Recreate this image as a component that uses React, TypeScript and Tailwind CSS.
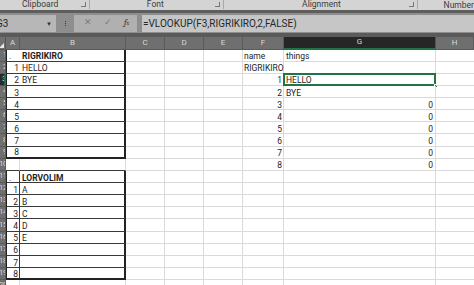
import type { ReactNode } from 'react'

const FONT = "font-['Liberation_Sans_Narrow','Roboto',sans-serif]"

const COLS = ['', 'A', 'B', 'C', 'D', 'E', 'F', 'G', 'H']

type Row = {
  a?: string
  b?: string
  f?: string
  g?: string
  bold?: boolean
  table?: 0 | 1 | 2 // 0 = none, 1 = first table, 2 = second table (has A|B divider)
  last?: boolean
  above?: boolean // row sits right above a table
}

const rows: Row[] = [
  { a: '.', b: 'RIGRIKIRO', bold: true, table: 1, f: 'name', g: 'things' },
  { a: '1', b: 'HELLO', table: 1, f: 'RIGRIKIRO' },
  { a: '2', b: 'BYE', table: 1, f: '1', g: 'HELLO' },
  { a: '3', table: 1, f: '2', g: 'BYE' },
  { a: '4', table: 1, f: '3', g: '0' },
  { a: '5', table: 1, f: '4', g: '0' },
  { a: '6', table: 1, f: '5', g: '0' },
  { a: '7', table: 1, f: '6', g: '0' },
  { a: '8', table: 1, last: true, f: '7', g: '0' },
  { f: '8', g: '0', above: true },
  { a: '.', b: 'LORVOLIM', bold: true, table: 2 },
  { a: '1', b: 'A', table: 2 },
  { a: '2', b: 'B', table: 2 },
  { a: '3', b: 'C', table: 2 },
  { a: '4', b: 'D', table: 2 },
  { a: '5', b: 'E', table: 2 },
  { a: '6', table: 2 },
  { a: '7', table: 2 },
  { a: '8', table: 2, last: true },
  {},
]

function Cell({ children, className = '' }: { children?: ReactNode; className?: string }) {
  return (
    <div className={`relative flex items-end whitespace-nowrap leading-none text-[8.5px] text-[#1e1e1e] ${className}`}>
      {children}
    </div>
  )
}

function Launcher() {
  return <span className="ml-auto mr-[3px] w-[5px] h-[5px] border border-[#777] border-t-0 border-l-0" />
}

function Ribbon() {
  return (
    <div className={`${FONT} text-[8.5px]`}>
      <div className="h-[10px] bg-[#d4d4d4] flex items-end text-[#3c3c3c] leading-none pb-[1px]">
        <div className="w-[91px] h-[9px] flex items-center border-r border-[#a8a8a8]">
          <span className="ml-[22px]">Clipboard</span>
          <Launcher />
        </div>
        <div className="w-[136px] h-[9px] flex items-center border-r border-[#a8a8a8]">
          <span className="ml-[57px]">Font</span>
          <Launcher />
        </div>
        <div className="w-[196px] h-[9px] flex items-center border-r border-[#a8a8a8]">
          <span className="ml-[78px]">Alignment</span>
          <Launcher />
        </div>
        <span className="ml-[26px]">Number</span>
      </div>
      <div className="h-[3px] bg-[#5e5e5e]" />
      <div className="h-[20px] bg-[#8e8e8e] flex items-center">
        <div className="w-[56px] h-[17px] bg-[#b7b7b7] flex items-center overflow-hidden text-[#2a2a2a]">
          <span className="-ml-[4px] text-[10px]">G3</span>
          <span className="ml-auto mr-[4px] text-[6px] text-[#333]">▼</span>
        </div>
        <div className="w-[18px] flex flex-col items-center gap-[1px]">
          <span className="w-[1px] h-[1px] bg-[#333]" />
          <span className="w-[1px] h-[1px] bg-[#333]" />
          <span className="w-[1px] h-[1px] bg-[#333]" />
        </div>
        <div className="w-[63px] h-[17px] bg-[#b0b0b0] flex items-center text-[#7a7a7a]">
          <span className="ml-[10px] text-[9px]">✕</span>
          <span className="ml-[12px] text-[9px]">✓</span>
          <span className="ml-[12px] text-[9px] italic font-serif text-[#333]">
            f<span className="text-[6px]">x</span>
          </span>
        </div>
        <div className="w-[5px]" />
        <div className="flex-1 h-[17px] bg-[#c6c6c6] flex items-center text-[#262626] text-[10px] pl-[1px]">
          =VLOOKUP(F3,RIGRIKIRO,2,FALSE)
        </div>
      </div>
      <div className="h-[4px] bg-[#5a5a5a]" />
    </div>
  )
}

export default function App() {
  return (
    <div className={`w-[474px] h-[285px] overflow-hidden bg-white ${FONT}`}>
      <Ribbon />
      <div className="grid grid-cols-[6px_14px_106px_39px_39px_39px_41px_152px_38px] grid-rows-[12.5px_repeat(20,12.15px)]">
        {COLS.map((c, i) =>
          i === 0 ? (
            <div key="corner" className="bg-[#6f6f6f] border-r border-b border-[#555] flex items-end justify-end">
              <span className="w-0 h-0 border-l-[5px] border-l-transparent border-b-[5px] border-b-[#e8e8e8] mr-[1px] mb-[1px]" />
            </div>
          ) : (
            <div
              key={c}
              className={
                c === 'G'
                  ? 'bg-[#262626] text-[#d8d8d8] border-r border-[#555] border-b-2 border-b-[#217346] flex items-center justify-center text-[8px] leading-none'
                  : 'bg-[#6f6f6f] text-[#d8d8d8] border-r border-b border-[#5a5a5a] flex items-center justify-center text-[8px] leading-none'
              }
            >
              {c}
            </div>
          ),
        )}
        {rows.map((r, i) => {
          const n = i + 1
          const inTable = !!r.table
          const rowBorder = inTable || r.above ? 'border-b border-b-[#3a3a3a]' : 'border-b border-b-[#dadada]'
          const lastBorder = r.last ? 'border-b-2 border-b-[#222]' : rowBorder
          const aDivider = r.table === 2 ? 'border-r border-r-[#3a3a3a]' : inTable ? '' : 'border-r border-r-[#dadada]'
          return [
            <div
              key={`h${n}`}
              className={
                n === 3
                  ? 'bg-[#2a2a2a] border-r-2 border-r-[#217346] border-b border-b-[#555] text-[7px] text-[#ddd] flex items-center justify-end overflow-hidden leading-none'
                  : 'bg-[#6f6f6f] border-r border-r-[#5a5a5a] border-b border-b-[#5a5a5a] text-[7px] text-[#ddd] flex items-center justify-end overflow-hidden leading-none'
              }
            >
              <span className="-mr-[2px]">{n}</span>
            </div>,
            <Cell
              key={`a${n}`}
              className={`${inTable ? 'border-l border-l-[#222]' : ''} ${aDivider} ${lastBorder} ${r.a === '.' ? 'justify-start pl-[2px]' : 'justify-end pr-[1px]'}`}
            >
              {r.a}
            </Cell>,
            <Cell
              key={`b${n}`}
              className={`${inTable ? 'border-r-2 border-r-[#222]' : 'border-r border-r-[#dadada]'} ${lastBorder} pl-[2px] ${r.bold ? 'font-bold' : ''}`}
            >
              {r.b}
            </Cell>,
            <Cell key={`c${n}`} className="border-r border-b border-[#dadada]" />,
            <Cell key={`d${n}`} className="border-r border-b border-[#dadada]" />,
            <Cell key={`e${n}`} className="border-r border-b border-[#dadada]" />,
            <Cell
              key={`f${n}`}
              className={`border-r border-b border-[#dadada] ${r.f && /^\d+$/.test(r.f) ? 'justify-end pr-[1px]' : 'pl-[1px]'}`}
            >
              {r.f}
            </Cell>,
            <Cell
              key={`g${n}`}
              className={`border-r border-b border-[#dadada] ${r.g === '0' ? 'justify-end pr-[2px]' : 'pl-[2px]'}`}
            >
              {r.g}
              {n === 3 && (
                <>
                  <span className="absolute -left-[1px] -top-[1px] -right-[1px] -bottom-[1px] border-2 border-[#217346] pointer-events-none" />
                  <span className="absolute -right-[3px] -bottom-[3px] w-[4px] h-[4px] bg-[#217346] border border-white" />
                </>
              )}
            </Cell>,
            <Cell key={`h2${n}`} className="border-b border-[#dadada]" />,
          ]
        })}
      </div>
    </div>
  )
}
